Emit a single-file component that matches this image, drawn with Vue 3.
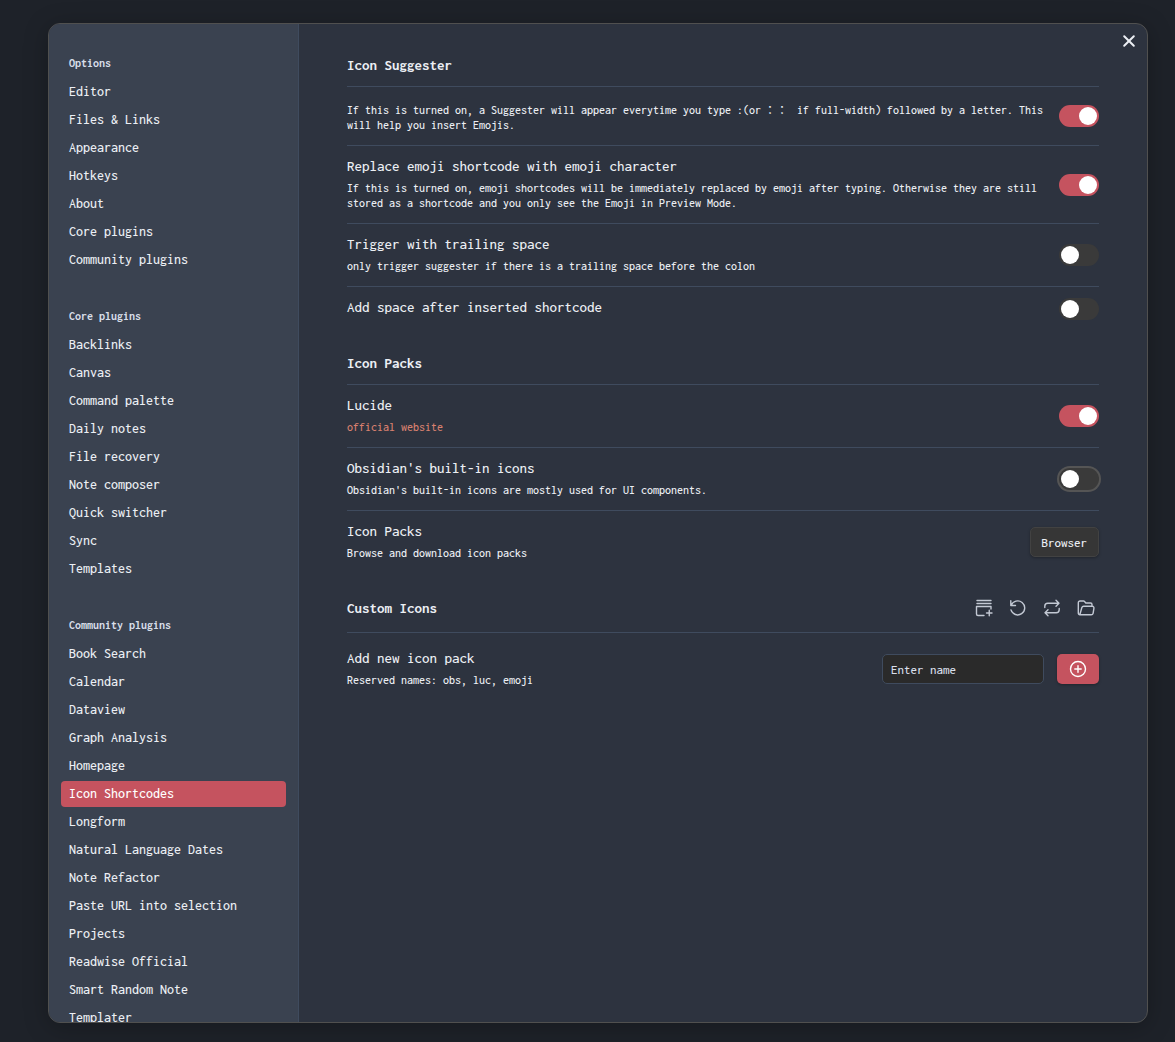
<script setup>
import { ref } from 'vue'

const groups = [
  {
    title: 'Options',
    items: ['Editor', 'Files & Links', 'Appearance', 'Hotkeys', 'About', 'Core plugins', 'Community plugins'],
  },
  {
    title: 'Core plugins',
    items: ['Backlinks', 'Canvas', 'Command palette', 'Daily notes', 'File recovery', 'Note composer', 'Quick switcher', 'Sync', 'Templates'],
  },
  {
    title: 'Community plugins',
    items: ['Book Search', 'Calendar', 'Dataview', 'Graph Analysis', 'Homepage', 'Icon Shortcodes', 'Longform', 'Natural Language Dates', 'Note Refactor', 'Paste URL into selection', 'Projects', 'Readwise Official', 'Smart Random Note', 'Templater'],
  },
]
const active = ref('Icon Shortcodes')

const suggester = ref([
  {
    id: 'suggester',
    name: '',
    desc: 'If this is turned on, a Suggester will appear everytime you type :(or ：： if full-width) followed by a letter. This will help you insert Emojis.',
    on: true,
  },
  {
    id: 'replace',
    name: 'Replace emoji shortcode with emoji character',
    desc: 'If this is turned on, emoji shortcodes will be immediately replaced by emoji after typing. Otherwise they are still stored as a shortcode and you only see the Emoji in Preview Mode.',
    on: true,
  },
  {
    id: 'trailing',
    name: 'Trigger with trailing space',
    desc: 'only trigger suggester if there is a trailing space before the colon',
    on: false,
  },
  { id: 'space', name: 'Add space after inserted shortcode', desc: '', on: false },
])
const lucide = ref(true)
const builtin = ref(false)
const packName = ref('')
</script>

<template>
  <div class="page">
    <div class="modal" role="dialog" aria-label="Settings">
      <nav class="sidebar">
        <section v-for="g in groups" :key="g.title" class="group">
          <h2 class="group-title">{{ g.title }}</h2>
          <button
            v-for="item in g.items"
            :key="item"
            type="button"
            class="nav-item"
            :class="{ active: item === active }"
            @click="active = item"
          >{{ item }}</button>
        </section>
      </nav>

      <main class="content">
        <button type="button" class="close" aria-label="Close">
          <svg width="14" height="14" viewBox="0 0 14 14"><path d="M2.2 2.2l9.6 9.6M11.8 2.2l-9.6 9.6" /></svg>
        </button>

        <section class="block">
          <div class="heading"><h3>Icon Suggester</h3></div>
          <div v-for="s in suggester" :key="s.id" class="row">
            <label class="info" :for="s.id">
              <span v-if="s.name" class="name">{{ s.name }}</span>
              <span v-if="s.desc" class="desc">{{ s.desc }}</span>
            </label>
            <input :id="s.id" v-model="s.on" class="toggle" type="checkbox" />
          </div>
        </section>

        <section class="block">
          <div class="heading"><h3>Icon Packs</h3></div>
          <div class="row">
            <div class="info">
              <label class="name" for="lucide">Lucide</label>
              <span class="desc"><a href="#lucide">official website</a></span>
            </div>
            <input id="lucide" v-model="lucide" class="toggle" type="checkbox" />
          </div>
          <div class="row">
            <label class="info" for="builtin">
              <span class="name">Obsidian's built-in icons</span>
              <span class="desc">Obsidian's built-in icons are mostly used for UI components.</span>
            </label>
            <input id="builtin" v-model="builtin" class="toggle ringed" type="checkbox" />
          </div>
          <div class="row">
            <div class="info">
              <span class="name">Icon Packs</span>
              <span class="desc">Browse and download icon packs</span>
            </div>
            <button type="button" class="btn">Browser</button>
          </div>
        </section>

        <section class="block">
          <div class="heading tools">
            <h3>Custom Icons</h3>
            <div class="actions">
              <button type="button" class="icon-btn" aria-label="Add icons">
                <svg width="18" height="18" viewBox="0 0 18 18">
                  <path d="M2 1.500h14M2 4.500h14M1.500 10V7.500h14.500v2.500M1.500 7.500v7.500a1.500 1.500 0 0 0 1.500 1.500h6M11.500 14h5.500M14.250 11.250v5.500" />
                </svg>
              </button>
              <button type="button" class="icon-btn" aria-label="Restore">
                <svg width="18" height="18" viewBox="0 0 18 18">
                  <path d="M1.800 1.800v4.700h4.700M2.200 6.300a7 7 0 1 1-.2 4.600" />
                </svg>
              </button>
              <button type="button" class="icon-btn" aria-label="Sync">
                <svg width="18" height="18" viewBox="0 0 18 18">
                  <path d="M13 1.300l3 3-3 3M1.800 8.500v-1.200a3 3 0 0 1 3-3H16M5 16.700l-3-3 3-3M16.200 9.500v1.200a3 3 0 0 1-3 3H2" />
                </svg>
              </button>
              <button type="button" class="icon-btn" aria-label="Open folder">
                <svg width="18" height="18" viewBox="0 0 18 18">
                  <path d="M15 7.300V5.500A1.500 1.500 0 0 0 13.500 4H8.800L7.300 2.300a1 1 0 0 0-.8-.3H3A1.700 1.700 0 0 0 1.300 3.700v10.600A1.500 1.500 0 0 0 2.800 15.800h11.400a2 2 0 0 0 1.900-1.500l.8-5A1.600 1.600 0 0 0 15.300 7.300H6.700a2 2 0 0 0-1.900 1.400l-1.900 6.800" />
                </svg>
              </button>
            </div>
          </div>
          <div class="row tall">
            <div class="info">
              <label class="name" for="pack">Add new icon pack</label>
              <span class="desc">Reserved names: obs, luc, emoji</span>
            </div>
            <div class="controls">
              <input id="pack" v-model="packName" class="field" type="text" placeholder="Enter name" />
              <button type="button" class="btn cta" aria-label="Add icon pack">
                <svg width="18" height="18" viewBox="0 0 18 18">
                  <circle cx="9" cy="9" r="7.500" /><path d="M9 5.800v6.400M5.800 9h6.400" />
                </svg>
              </button>
            </div>
          </div>
        </section>
      </main>
    </div>
  </div>
</template>

<style>
body {
  margin: 0;
  background: #1e2229;
}
</style>

<style scoped>
.page {
  box-sizing: border-box;
  display: flex;
  height: 100vh;
  padding: 23px 27px 19px 48px;
  background: #1e2229;
  color: #eceff4;
  font-family: Inconsolata, "Noto Sans Mono CJK SC", "Liberation Mono", "Noto Sans CJK SC", monospace;
  font-size: 14px;
  font-weight: 500;
  text-spacing-trim: space-all;
}
.page * {
  box-sizing: border-box;
}
button,
input {
  font: inherit;
  color: inherit;
}
button {
  cursor: pointer;
}
svg {
  display: block;
  fill: none;
  stroke: currentColor;
  stroke-linecap: round;
  stroke-linejoin: round;
}
.modal {
  flex: 1;
  display: flex;
  min-width: 0;
  overflow: hidden;
  border: 1px solid #50504f;
  border-radius: 12px;
  background: #2d333f;
  box-shadow: 0 4px 24px rgba(0, 0, 0, 0.25);
}
.sidebar {
  flex: 0 0 250px;
  display: flex;
  flex-direction: column;
  gap: 30px;
  padding: 26px 12px;
  overflow-y: auto;
  scrollbar-width: none;
  border-right: 1px solid #3f4b5e;
  background: #3a4250;
}
.group {
  display: flex;
  flex-direction: column;
  gap: 2px;
}
.group-title {
  margin: 0 0 1px;
  padding: 0 8px;
  font-size: 12px;
  font-weight: 700;
  line-height: 26px;
  color: #d8dee9;
}
.nav-item {
  height: 26px;
  padding: 0 8px;
  border: 0;
  border-radius: 4px;
  background: none;
  line-height: 26px;
  text-align: left;
  white-space: nowrap;
}
.nav-item.active {
  background: #c5535f;
  color: #fff;
}
.content {
  position: relative;
  flex: 1;
  min-width: 0;
  display: flex;
  flex-direction: column;
  gap: 23px;
  padding: 31px 48px;
  overflow-y: auto;
}
.close {
  position: absolute;
  top: 5px;
  right: 6px;
  display: grid;
  place-items: center;
  width: 24px;
  height: 24px;
  padding: 0;
  border: 0;
  background: none;
}
.close svg {
  stroke-width: 2;
}
.heading {
  display: flex;
  align-items: center;
  justify-content: space-between;
  padding-bottom: 11px;
}
.heading h3 {
  margin: 0;
  font-size: 15px;
  font-weight: 700;
  line-height: 20px;
}
.tools {
  padding-bottom: 12px;
}
.actions {
  display: flex;
  gap: 8px;
}
.icon-btn {
  display: grid;
  place-items: center;
  width: 26px;
  height: 24px;
  padding: 0;
  border: 0;
  background: none;
  color: #c3c9d4;
}
.icon-btn svg {
  stroke-width: 1.4;
}
.row {
  display: flex;
  align-items: center;
  gap: 12px;
  padding: 12px 0;
  border-top: 1px solid #3f4b5e;
}
.tall {
  padding: 17px 0;
}
.info {
  flex: 1;
  min-width: 0;
}
.name {
  display: block;
  padding-bottom: 2px;
  font-size: 15px;
  line-height: 17px;
}
.desc {
  display: block;
  padding-top: 4px;
  font-size: 12px;
  line-height: 15px;
}
.desc a {
  color: #d8806f;
  text-decoration: none;
}
.toggle {
  flex: none;
  appearance: none;
  width: 40px;
  height: 22px;
  margin: -2px 0;
  padding: 2px;
  border-radius: 11px;
  background: #3a3a3a;
}
.toggle::before {
  content: '';
  display: block;
  width: 18px;
  height: 18px;
  border-radius: 50%;
  background: #fff;
}
.toggle:checked {
  background: #c5535f;
}
.toggle:checked::before {
  margin-left: auto;
}
.ringed {
  box-shadow: 0 0 0 2px #555;
}
.btn {
  height: 30px;
  padding: 0 11px;
  border: 1px solid #424242;
  border-radius: 5px;
  background: #363636;
  box-shadow: 0 1px 3px rgba(0, 0, 0, 0.3);
  font-size: 13px;
}
.controls {
  display: flex;
  gap: 13px;
}
.field {
  width: 162px;
  height: 30px;
  padding: 0 8px;
  border: 1px solid #3f4b5e;
  border-radius: 5px;
  outline: 0;
  background: #2a2a2a;
  font-size: 13px;
}
.field::placeholder {
  color: #d8dee9;
  opacity: 1;
}
.cta {
  display: grid;
  place-items: center;
  width: 42px;
  padding: 0;
  border: 0;
  background: #c5535f;
  color: #fff;
}
.cta svg {
  stroke-width: 1.4;
}
</style>
